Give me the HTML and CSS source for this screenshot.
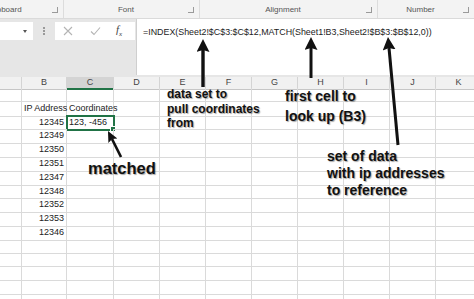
FILE: index.html
```html
<!DOCTYPE html>
<html lang="en">
<head>
    <meta charset="UTF-8">
    <meta name="viewport" content="width=device-width, initial-scale=1.0">
    <title>INDEX MATCH example</title>
    <link rel="stylesheet" href="styles.css">
</head>
<body>
    <div class="window">
        <div class="ribbon">
            <div class="group group-clip"><span class="label">Clipboard</span><span class="launch"></span></div>
            <div class="group group-font"><span class="label">Font</span><span class="launch"></span></div>
            <div class="group group-align"><span class="label">Alignment</span><span class="launch"></span></div>
            <div class="group group-number"><span class="label">Number</span><span class="launch"></span></div>
        </div>

        <div class="fbar">
            <div class="tools">
                <div class="namebox"><span class="dd"></span></div>
                <div class="grip"><i></i><i></i><i></i></div>
                <div class="fx-box">
                    <svg class="tool-icon" width="10" height="10" viewBox="0 0 10 10"><path d="M1 1 L9 9 M9 1 L1 9" stroke="#b4b4b4" stroke-width="1.1" fill="none"/></svg>
                    <svg class="tool-icon" width="11" height="10" viewBox="0 0 11 10"><path d="M1 5.5 L4 8.5 L10 1.5" stroke="#b4b4b4" stroke-width="1.1" fill="none"/></svg>
                    <span class="fx">f<sub>x</sub></span>
                </div>
            </div>
            <div class="formula">=INDEX(Sheet2!$C$3:$C$12,MATCH(Sheet1!B3,Sheet2!$B$3:$B$12,0))</div>
        </div>

        <div class="sheet">
            <div class="row heads"><div class="cut">A</div><div>B</div><div class="active">C</div><div>D</div><div>E</div><div>F</div><div>G</div><div>H</div><div>I</div><div>J</div><div>K</div></div>
            <div class="row"><div></div><div></div><div></div><div></div><div></div><div></div><div></div><div></div><div></div><div></div><div></div></div>
            <div class="row"><div></div><div class="txt">IP Address</div><div class="txt">Coordinates</div><div></div><div></div><div></div><div></div><div></div><div></div><div></div><div></div></div>
            <div class="row"><div></div><div class="num">12345</div><div class="txt sel">123, -456</div><div></div><div></div><div></div><div></div><div></div><div></div><div></div><div></div></div>
            <div class="row"><div></div><div class="num">12349</div><div></div><div></div><div></div><div></div><div></div><div></div><div></div><div></div><div></div></div>
            <div class="row"><div></div><div class="num">12350</div><div></div><div></div><div></div><div></div><div></div><div></div><div></div><div></div><div></div></div>
            <div class="row"><div></div><div class="num">12351</div><div></div><div></div><div></div><div></div><div></div><div></div><div></div><div></div><div></div></div>
            <div class="row"><div></div><div class="num">12347</div><div></div><div></div><div></div><div></div><div></div><div></div><div></div><div></div><div></div></div>
            <div class="row"><div></div><div class="num">12348</div><div></div><div></div><div></div><div></div><div></div><div></div><div></div><div></div><div></div></div>
            <div class="row"><div></div><div class="num">12352</div><div></div><div></div><div></div><div></div><div></div><div></div><div></div><div></div><div></div></div>
            <div class="row"><div></div><div class="num">12353</div><div></div><div></div><div></div><div></div><div></div><div></div><div></div><div></div><div></div></div>
            <div class="row"><div></div><div class="num">12346</div><div></div><div></div><div></div><div></div><div></div><div></div><div></div><div></div><div></div></div>
            <div class="row"><div></div><div></div><div></div><div></div><div></div><div></div><div></div><div></div><div></div><div></div><div></div></div>
            <div class="row"><div></div><div></div><div></div><div></div><div></div><div></div><div></div><div></div><div></div><div></div><div></div></div>
            <div class="row"><div></div><div></div><div></div><div></div><div></div><div></div><div></div><div></div><div></div><div></div><div></div></div>
            <div class="row"><div></div><div></div><div></div><div></div><div></div><div></div><div></div><div></div><div></div><div></div><div></div></div>
            <div class="row"><div></div><div></div><div></div><div></div><div></div><div></div><div></div><div></div><div></div><div></div><div></div></div>
        </div>

        <!-- annotation arrows drawn over the sheet -->
        <svg class="arrows" width="474" height="299" viewBox="0 0 474 299">
            <defs>
                <marker id="head" markerUnits="userSpaceOnUse" markerWidth="14" markerHeight="14" refX="2" refY="6.5" orient="auto">
                    <path d="M0 0 L13 6.5 L0 13 L2 6.5 Z" fill="#111"/>
                </marker>
                <marker id="head-sm" markerUnits="userSpaceOnUse" markerWidth="12" markerHeight="12" refX="2" refY="5" orient="auto">
                    <path d="M0 0 L11 5 L0 10 L2 5 Z" fill="#111"/>
                </marker>
            </defs>
            <line x1="203" y1="87" x2="203" y2="50" stroke="#111" stroke-width="3.4" marker-end="url(#head)"/>
            <line x1="311" y1="78" x2="311" y2="48" stroke="#111" stroke-width="3" marker-end="url(#head)"/>
            <line x1="398" y1="145" x2="389" y2="48" stroke="#111" stroke-width="3" marker-end="url(#head)"/>
            <line x1="121" y1="157" x2="112" y2="139" stroke="#111" stroke-width="2.6" marker-end="url(#head-sm)"/>
        </svg>

        <div class="note note-data">data set to<br>pull coordinates<br>from</div>
        <div class="note note-first">first cell to<br>look up (B3)</div>
        <div class="note note-set">set of data<br>with ip addresses<br>to reference</div>
        <div class="note note-match">matched</div>
    </div>
</body>
</html>
```

FILE: styles.css
```css
body {
    margin: 0;
    padding: 0;
    background: #fff;
    font-family: "Liberation Sans", Arial, sans-serif;
}

.window {
    position: relative;
    width: 474px;
    height: 299px;
    overflow: hidden;
}

/* ribbon group captions */
.ribbon {
    display: flex;
    height: 18px;
    background: #f3f3f3;
    border-bottom: 1px solid #dadada;
}
.group {
    display: flex;
    align-items: center;
    flex-shrink: 0;
    border-right: 1px solid #dcdcdc;
    box-sizing: border-box;
}
.group-clip { margin-left: -43px; width: 107px; }
.group-font { width: 136px; }
.group-align { width: 178px; }
.group-number { width: 96px; border-right: none; }
.label {
    flex: 1;
    text-align: center;
    font-size: 8px;
    color: #555;
}
.launch {
    width: 5px;
    height: 5px;
    margin-right: 5px;
    border-right: 1px solid #9a9a9a;
    border-bottom: 1px solid #9a9a9a;
    position: relative;
    top: 1px;
}

/* formula bar */
.fbar {
    display: flex;
    height: 56px;
    padding-bottom: 2px;
    background: #e6e6e6;
}
.tools {
    display: flex;
    align-items: flex-start;
    width: 136px;
    padding-top: 3px;
    flex-shrink: 0;
}
.namebox {
    width: 33px;
    height: 18px;
    background: #fff;
    display: flex;
    align-items: center;
    justify-content: flex-end;
    padding-right: 6px;
    box-sizing: border-box;
}
.dd {
    width: 0;
    height: 0;
    border-left: 2.5px solid transparent;
    border-right: 2.5px solid transparent;
    border-top: 3px solid #555;
}
.grip {
    width: 22px;
    height: 18px;
    display: flex;
    flex-direction: column;
    align-items: center;
    justify-content: center;
    gap: 1.5px;
}
.grip i {
    width: 1.5px;
    height: 1.5px;
    background: #999;
}
.fx-box {
    width: 80px;
    height: 18px;
    background: #fff;
    display: flex;
    align-items: center;
    gap: 17px;
    padding-left: 8px;
    box-sizing: border-box;
}
.fx {
    font-family: "Liberation Serif", serif;
    font-style: italic;
    font-size: 11px;
    color: #444;
    margin-left: -2px;
}
.fx sub {
    font-size: 7px;
}
.formula {
    flex: 1;
    background: #fff;
    border-left: 1px solid #cfcfcf;
    padding: 7px 0 0 6px;
    font-size: 8.9px;
    line-height: 12px;
    color: #222;
    white-space: nowrap;
}

/* worksheet grid */
.row {
    display: grid;
    grid-template-columns: 46px 45px 47px 46px 46px 46px 46px 46px 46px 46px 46px;
    height: 13.8px;
    margin-left: -24px;
}
.row > div {
    box-sizing: border-box;
    border-right: 1px solid #dadada;
    border-bottom: 1px solid #dadada;
    font-size: 9px;
    line-height: 13.8px;
    color: #222;
    white-space: nowrap;
    position: relative;
}
.row.heads {
    height: 11px;
}
.row.heads > div {
    background: #f1f1f1;
    border-right-color: #d4d4d4;
    border-bottom-color: #c6c6c6;
    text-align: center;
    line-height: 11px;
    color: #444;
}
.row.heads > div.cut {
    text-indent: -6px;
}
.row.heads > div.active {
    background: #d4d4d4;
    border-bottom: 2px solid #217346;
}
.txt {
    padding-left: 2px;
}
.num {
    text-align: right;
    padding-right: 2px;
}
.sel {
    outline: 2px solid #217346;
    outline-offset: -1px;
}
.sel::after {
    content: "";
    position: absolute;
    right: -3px;
    bottom: -3px;
    width: 4px;
    height: 4px;
    background: #217346;
    border: 1px solid #fff;
}

/* overlays */
.arrows {
    position: absolute;
    top: 0;
    left: 0;
    pointer-events: none;
}
.note {
    position: absolute;
    font-weight: bold;
    color: #111;
    white-space: nowrap;
    text-shadow: 1px 1px 1px rgba(0, 0, 0, 0.35);
}
.note-data {
    left: 167px;
    top: 87px;
    font-size: 12px;
    line-height: 14.5px;
}
.note-first {
    left: 285px;
    top: 86px;
    font-size: 14px;
    line-height: 20px;
}
.note-set {
    left: 327px;
    top: 148px;
    font-size: 14px;
    line-height: 17px;
}
.note-match {
    left: 88px;
    top: 158px;
    font-size: 16.5px;
    line-height: 20px;
}
```
